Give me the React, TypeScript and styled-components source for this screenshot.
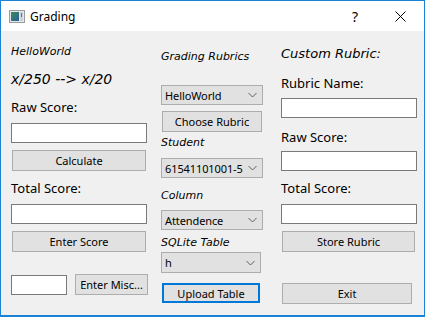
import styled, { createGlobalStyle } from 'styled-components';

const GlobalStyle = createGlobalStyle`
  html, body {
    margin: 0;
    padding: 0;
    background: #ffffff;
  }
  body {
    font-family: 'Noto Sans', 'Liberation Sans', sans-serif;
    color: #000000;
  }
`;

const hand = `'DejaVu Sans', 'Liberation Sans', sans-serif`;

const Window = styled.div`
  display: flex;
  flex-direction: column;
  width: 425px;
  height: 317px;
  box-sizing: border-box;
  border: 1px solid #1883d7;
  border-bottom-width: 2px;
  background: #f0f0f0;
`;

const TitleBar = styled.div`
  display: flex;
  align-items: center;
  height: 30px;
  flex-shrink: 0;
  background: #ffffff;
  padding-left: 8px;
`;

const TitleText = styled.span`
  margin-left: 5px;
  font-size: 12px;
  color: #000000;
  flex: 1;
`;

const HelpButton = styled.span`
  width: 20px;
  margin-right: 12px;
  text-align: center;
  font-size: 14px;
`;

const CloseButton = styled.span`
  display: flex;
  align-items: center;
  justify-content: center;
  width: 46px;
  height: 30px;
  margin-right: 1px;
`;

const Body = styled.div`
  display: grid;
  grid-template-columns: 136px 102px 136px;
  column-gap: 14px;
  padding-left: 10px;
  flex: 1;
`;

const Column = styled.div`
  display: flex;
  flex-direction: column;
  align-items: flex-start;
  &:nth-child(3) {
    margin-left: 4px;
  }
`;

const Hand = styled.div<{ $top: number; $size: number; $lh: number }>`
  margin-top: ${({ $top }) => $top}px;
  font-family: ${hand};
  font-style: oblique;
  font-size: ${({ $size }) => $size}px;
  line-height: ${({ $lh }) => $lh}px;
  color: #000000;
  white-space: nowrap;
`;

const Label = styled.div<{ $top: number }>`
  margin-top: ${({ $top }) => $top}px;
  font-size: 13px;
  line-height: 18px;
  color: #000000;
  white-space: nowrap;
`;

const Input = styled.div<{ $top?: number; $w?: number }>`
  margin-top: ${({ $top = 0 }) => $top}px;
  width: ${({ $w = 136 }) => $w}px;
  height: 20px;
  box-sizing: border-box;
  border: 1px solid #7a7a7a;
  background: #ffffff;
  flex-shrink: 0;
`;

const Button = styled.div<{ $top?: number; $w: number; $focus?: boolean }>`
  margin-top: ${({ $top = 0 }) => $top}px;
  margin-left: 1px;
  width: ${({ $w }) => $w}px;
  height: ${({ $focus }) => ($focus ? 20 : 21)}px;
  box-sizing: border-box;
  border: ${({ $focus }) => ($focus ? '2px solid #0078d7' : '1px solid #adadad')};
  background: #e1e1e1;
  display: flex;
  align-items: center;
  justify-content: center;
  font-size: 11px;
  color: #000000;
  white-space: nowrap;
`;

const Combo = styled.div<{ $top: number; $w?: number; $h?: number }>`
  margin-top: ${({ $top }) => $top}px;
  width: ${({ $w = 102 }) => $w}px;
  height: ${({ $h = 20 }) => $h}px;
  box-sizing: border-box;
  border: 1px solid #adadad;
  background: #e1e1e1;
  display: flex;
  align-items: center;
  justify-content: space-between;
  padding: 0 5px 0 3px;
  font-size: 11px;
  letter-spacing: -0.1px;
  color: #000000;
  white-space: nowrap;
`;

const MiscRow = styled.div`
  margin-top: 22px;
  display: flex;
  align-items: center;
  gap: 7px;
`;

const Chevron = () => (
  <svg width="9" height="6" viewBox="0 0 9 6">
    <polyline points="0.5,1 4.5,5 8.5,1" fill="none" stroke="#606060" strokeWidth="1" />
  </svg>
);

const AppIcon = () => (
  <svg width="16" height="13" viewBox="0 0 16 13">
    <defs>
      <linearGradient id="ig" x1="0" y1="0" x2="1" y2="1">
        <stop offset="0" stopColor="#3b8a5a" />
        <stop offset="1" stopColor="#2a5f9a" />
      </linearGradient>
    </defs>
    <rect x="0.5" y="0.5" width="15" height="12" fill="#e8e8e8" stroke="#9a9a9a" />
    <rect x="2" y="2" width="8" height="9" fill="url(#ig)" />
    <rect x="11" y="2" width="3" height="9" fill="#c8d2d8" />
    <rect x="12" y="3" width="1" height="4" fill="#5a7a9a" />
  </svg>
);

const CloseIcon = () => (
  <svg width="11" height="11" viewBox="0 0 11 11">
    <path d="M0.5 0.5 L10.5 10.5 M10.5 0.5 L0.5 10.5" stroke="#000" strokeWidth="1" />
  </svg>
);

const App = () => (
  <>
    <GlobalStyle />
    <Window>
      <TitleBar>
        <AppIcon />
        <TitleText>Grading</TitleText>
        <HelpButton>?</HelpButton>
        <CloseButton>
          <CloseIcon />
        </CloseButton>
      </TitleBar>
      <Body>
        <Column>
          <Hand $top={13} $size={11} $lh={16}>HelloWorld</Hand>
          <Hand $top={9} $size={14} $lh={20}>x/250 --&gt; x/20</Hand>
          <Label $top={9}>Raw Score:</Label>
          <Input $top={7} />
          <Button $top={7} $w={134}>Calculate</Button>
          <Label $top={8}>Total Score:</Label>
          <Input $top={7} />
          <Button $top={7} $w={134}>Enter Score</Button>
          <MiscRow>
            <Input $w={56} />
            <Button $w={73}>Enter Misc...</Button>
          </MiscRow>
        </Column>
        <Column>
          <Hand $top={18} $size={11} $lh={16}>Grading Rubrics</Hand>
          <Combo $top={20}>
            HelloWorld
            <Chevron />
          </Combo>
          <Button $top={6} $w={100}>Choose Rubric</Button>
          <Hand $top={3} $size={11} $lh={16}>Student</Hand>
          <Combo $top={7}>
            61541101001-5
            <Chevron />
          </Combo>
          <Hand $top={10} $size={11} $lh={16}>Column</Hand>
          <Combo $top={6}>
            Attendence
            <Chevron />
          </Combo>
          <Hand $top={5} $size={11} $lh={16}>SQLite Table</Hand>
          <Combo $top={1} $w={100} $h={21}>
            h
            <Chevron />
          </Combo>
          <Button $top={10} $w={98} $focus>Upload Table</Button>
        </Column>
        <Column>
          <Hand $top={14} $size={13} $lh={18}>Custom Rubric:</Hand>
          <Label $top={11}>Rubric Name:</Label>
          <Input $top={6} />
          <Label $top={10}>Raw Score:</Label>
          <Input $top={5} />
          <Label $top={8}>Total Score:</Label>
          <Input $top={7} />
          <Button $top={7} $w={133}>Store Rubric</Button>
          <Button $top={31} $w={130}>Exit</Button>
        </Column>
      </Body>
    </Window>
  </>
);

export default App;
